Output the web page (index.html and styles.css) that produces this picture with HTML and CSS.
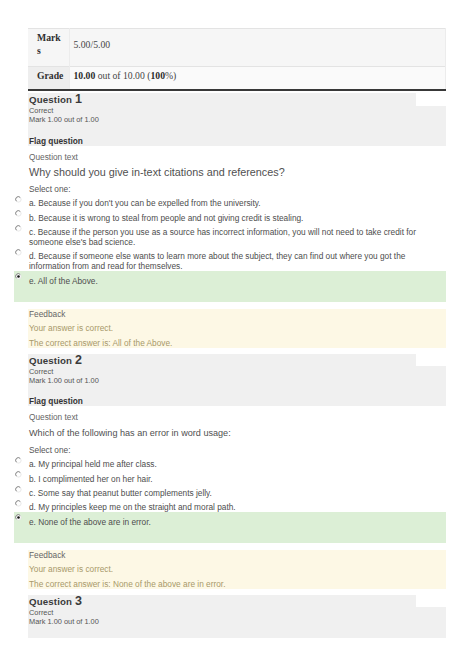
FILE: index.html
```html
<!DOCTYPE html>
<html>
<head>
<meta charset="utf-8">
<link rel="stylesheet" href="styles.css">
</head>
<body>
<div class="page">
  <table class="summary">
    <colgroup><col class="c-head"><col></colgroup>
    <tr class="row-marks"><th>Marks</th><td>5.00/5.00</td></tr>
    <tr class="row-grade"><th>Grade</th><td><b>10.00</b> out of 10.00 (<b>100</b>%)</td></tr>
  </table>

  <div class="que">
    <div class="info">
      <h3 class="qno"><span class="qword">Question</span> <span class="qnum">1</span></h3>
      <div class="info-body">
        <div class="state">Correct</div>
        <div class="grade">Mark 1.00 out of 1.00</div>
        <div class="flag">Flag question</div>
      </div>
    </div>
    <div class="formulation">
      <div class="qtext-label">Question text</div>
      <div class="qtext qtext-lg">Why should you give in-text citations and references?</div>
      <div class="prompt">Select one:</div>
      <div class="answers">
        <div class="opt"><span class="radio"><svg viewBox="0 0 7 7" width="7" height="7"><circle cx="3.5" cy="3.5" r="2.6" fill="#fff" stroke="#e2e2e2" stroke-width="0.8"/><path d="M1.4 5.2 A2.6 2.6 0 0 1 5.2 1.4" fill="none" stroke="#7d7d7d" stroke-width="0.9"/></svg></span><span class="lbl">a. Because if you don't you can be expelled from the university.</span></div>
        <div class="opt"><span class="radio"><svg viewBox="0 0 7 7" width="7" height="7"><circle cx="3.5" cy="3.5" r="2.6" fill="#fff" stroke="#e2e2e2" stroke-width="0.8"/><path d="M1.4 5.2 A2.6 2.6 0 0 1 5.2 1.4" fill="none" stroke="#7d7d7d" stroke-width="0.9"/></svg></span><span class="lbl">b. Because it is wrong to steal from people and not giving credit is stealing.</span></div>
        <div class="opt"><span class="radio"><svg viewBox="0 0 7 7" width="7" height="7"><circle cx="3.5" cy="3.5" r="2.6" fill="#fff" stroke="#e2e2e2" stroke-width="0.8"/><path d="M1.4 5.2 A2.6 2.6 0 0 1 5.2 1.4" fill="none" stroke="#7d7d7d" stroke-width="0.9"/></svg></span><span class="lbl">c. Because if the person you use as a source has incorrect information, you will not need to take credit for someone else's bad science.</span></div>
        <div class="opt"><span class="radio"><svg viewBox="0 0 7 7" width="7" height="7"><circle cx="3.5" cy="3.5" r="2.6" fill="#fff" stroke="#e2e2e2" stroke-width="0.8"/><path d="M1.4 5.2 A2.6 2.6 0 0 1 5.2 1.4" fill="none" stroke="#7d7d7d" stroke-width="0.9"/></svg></span><span class="lbl">d. Because if someone else wants to learn more about the subject, they can find out where you got the information from and read for themselves.</span></div>
        <div class="opt correct"><span class="radio"><svg viewBox="0 0 7 7" width="7" height="7"><circle cx="3.5" cy="3.5" r="2.6" fill="#fff" stroke="#e2e2e2" stroke-width="0.8"/><path d="M1.4 5.2 A2.6 2.6 0 0 1 5.2 1.4" fill="none" stroke="#7d7d7d" stroke-width="0.9"/><circle cx="3.5" cy="3.5" r="1.3" fill="#111"/></svg></span><span class="lbl">e. All of the Above.</span></div>
      </div>
      <div class="feedback">
        <div class="fb-label">Feedback</div>
        <div class="fb-text">Your answer is correct.</div>
        <div class="fb-text">The correct answer is: All of the Above.</div>
      </div>
    </div>
  </div>

  <div class="que">
    <div class="info">
      <h3 class="qno"><span class="qword">Question</span> <span class="qnum">2</span></h3>
      <div class="info-body">
        <div class="state">Correct</div>
        <div class="grade">Mark 1.00 out of 1.00</div>
        <div class="flag">Flag question</div>
      </div>
    </div>
    <div class="formulation">
      <div class="qtext-label">Question text</div>
      <div class="qtext qtext-sm">Which of the following has an error in word usage:</div>
      <div class="prompt">Select one:</div>
      <div class="answers">
        <div class="opt"><span class="radio"><svg viewBox="0 0 7 7" width="7" height="7"><circle cx="3.5" cy="3.5" r="2.6" fill="#fff" stroke="#e2e2e2" stroke-width="0.8"/><path d="M1.4 5.2 A2.6 2.6 0 0 1 5.2 1.4" fill="none" stroke="#7d7d7d" stroke-width="0.9"/></svg></span><span class="lbl">a. My principal held me after class.</span></div>
        <div class="opt"><span class="radio"><svg viewBox="0 0 7 7" width="7" height="7"><circle cx="3.5" cy="3.5" r="2.6" fill="#fff" stroke="#e2e2e2" stroke-width="0.8"/><path d="M1.4 5.2 A2.6 2.6 0 0 1 5.2 1.4" fill="none" stroke="#7d7d7d" stroke-width="0.9"/></svg></span><span class="lbl">b. I complimented her on her hair.</span></div>
        <div class="opt"><span class="radio"><svg viewBox="0 0 7 7" width="7" height="7"><circle cx="3.5" cy="3.5" r="2.6" fill="#fff" stroke="#e2e2e2" stroke-width="0.8"/><path d="M1.4 5.2 A2.6 2.6 0 0 1 5.2 1.4" fill="none" stroke="#7d7d7d" stroke-width="0.9"/></svg></span><span class="lbl">c. Some say that peanut butter complements jelly.</span></div>
        <div class="opt"><span class="radio"><svg viewBox="0 0 7 7" width="7" height="7"><circle cx="3.5" cy="3.5" r="2.6" fill="#fff" stroke="#e2e2e2" stroke-width="0.8"/><path d="M1.4 5.2 A2.6 2.6 0 0 1 5.2 1.4" fill="none" stroke="#7d7d7d" stroke-width="0.9"/></svg></span><span class="lbl">d. My principles keep me on the straight and moral path.</span></div>
        <div class="opt correct"><span class="radio"><svg viewBox="0 0 7 7" width="7" height="7"><circle cx="3.5" cy="3.5" r="2.6" fill="#fff" stroke="#e2e2e2" stroke-width="0.8"/><path d="M1.4 5.2 A2.6 2.6 0 0 1 5.2 1.4" fill="none" stroke="#7d7d7d" stroke-width="0.9"/><circle cx="3.5" cy="3.5" r="1.3" fill="#111"/></svg></span><span class="lbl">e. None of the above are in error.</span></div>
      </div>
      <div class="feedback">
        <div class="fb-label">Feedback</div>
        <div class="fb-text">Your answer is correct.</div>
        <div class="fb-text">The correct answer is: None of the above are in error.</div>
      </div>
    </div>
  </div>

  <div class="que">
    <div class="info">
      <h3 class="qno"><span class="qword">Question</span> <span class="qnum">3</span></h3>
      <div class="info-body info-body-short">
        <div class="state">Correct</div>
        <div class="grade">Mark 1.00 out of 1.00</div>
      </div>
    </div>
  </div>
</div>
</body>
</html>
```

FILE: styles.css
```css
* { box-sizing: border-box; }

body {
  margin: 0;
  background: #ffffff;
  font-family: "Liberation Sans", Arial, sans-serif;
  color: #4a4a4a;
}

.page {
  padding: 28px 28px 0 14px;
}

/* summary table */
.summary {
  margin-left: 14px;
  width: 418px;
  border-collapse: collapse;
  table-layout: fixed;
  font-family: "Liberation Serif", "Times New Roman", serif;
  font-size: 9.7px;
  line-height: 13px;
  color: #444;
}
.summary .c-head { width: 41px; }
.summary th,
.summary td {
  text-align: left;
  vertical-align: middle;
  border-top: 1px solid #e3e3e3;
  border-right: 1px solid #ececec;
}
.summary th {
  padding: 2px 5px 9px 9px;
  color: #2e2e2e;
  font-weight: bold;
  word-break: break-all;
}
.summary td {
  padding: 2px 4px 9px 4px;
}
.row-marks th,
.row-marks td { background: #f6f6f6; }
.row-grade th { background: #eeeeee; }
.row-grade td { background: #fafafa; }
.row-grade th,
.row-grade td {
  padding-bottom: 7px;
  border-bottom: 2px solid #383838;
}
.summary b { color: #2a2a2a; }

/* question info */
.que { margin-top: 6px; }
.que:first-of-type { margin-top: 2px; }

.info { margin-left: 14px; }
.qno {
  margin: 0 30px 0 0;
  height: 12.5px;
  background: #f0f0f0;
  font-size: 9.7px;
  line-height: 12.5px;
  font-weight: bold;
  color: #3a3a3a;
  letter-spacing: 0.15px;
  padding-left: 1px;
}
.qnum {
  font-size: 12.5px;
  letter-spacing: 0;
}
.info-body {
  background: #f0f0f0;
  padding-left: 1px;
  color: #555;
}
.state,
.grade {
  font-size: 7.4px;
  line-height: 9px;
}
.state { padding-top: 0.5px; }
.flag {
  margin-top: 11.5px;
  font-size: 8.3px;
  line-height: 10px;
  font-weight: bold;
  color: #333;
}
.info-body-short { padding-bottom: 12px; }

/* formulation */
.qtext-label,
.qtext,
.prompt {
  padding-left: 15px;
}
.qtext-label {
  margin-top: 6px;
  font-size: 8.3px;
  line-height: 10px;
  color: #666;
}
.qtext {
  margin-top: 4.8px;
  line-height: 13px;
  color: #505050;
}
.qtext-lg { font-size: 10.8px; }
.qtext-sm { font-size: 9.1px; }
.prompt {
  margin-top: 4.5px;
  font-size: 8.3px;
  line-height: 10px;
  color: #555;
}

.answers { display: flex; flex-direction: column; }
.opt {
  display: flex;
  align-items: flex-start;
  font-size: 8.3px;
  line-height: 10px;
  color: #4d4d4d;
}
.radio {
  width: 15px;
  flex: none;
  padding-left: 0.5px;
  padding-top: 2px;
  line-height: 0;
}
.radio svg { display: block; }
.lbl {
  flex: 1;
  padding-top: 4.4px;
  padding-right: 4px;
}
.opt.correct {
  background: #dcefd6;
}
.opt.correct .lbl {
  padding-bottom: 16.5px;
}

/* feedback */
.feedback {
  margin: 7px 0 0 14px;
  background: #fdf8e5;
  padding: 0 0 0 1px;
  font-size: 8.3px;
}
.fb-label {
  line-height: 9px;
  color: #666;
  padding-top: 0.5px;
}
.fb-text {
  margin-top: 4.6px;
  line-height: 10px;
  color: #a8996a;
}
```
